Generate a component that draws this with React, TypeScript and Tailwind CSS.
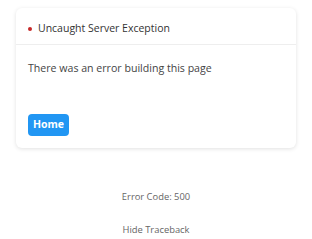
export default function App() {
  return (
    <div
      className="w-full min-h-[239px] bg-white pt-2 px-4"
      style={{ fontFamily: '"Open Sans", "Liberation Sans", sans-serif' }}
    >
      <div className="rounded-md bg-white shadow-[0_1px_4px_rgba(0,0,0,0.12)]">
        <div className="flex items-center gap-[6px] h-[37px] pt-[5px] px-3 border-b border-[#eeeeee]">
          <span className="w-[4px] h-[4px] rounded-full bg-[#c62828]" />
          <span className="text-[10.5px] leading-[15px] text-[#333333]">Uncaught Server Exception</span>
        </div>
        <div className="px-3 pt-[14px] pb-3">
          <p className="text-[10.6px] text-[#444444] leading-[18px]">
            There was an error building this page
          </p>
          <button className="mt-[37px] h-[22px] w-[41px] rounded-[4px] bg-[#2196f3] text-white text-[10.5px] font-bold">
            Home
          </button>
        </div>
      </div>
      <div className="flex flex-col items-center mt-[41px] gap-[18px] text-[9.4px] leading-[15px] text-[#666666]">
        <span>Error Code: 500</span>
        <span>Hide Traceback</span>
      </div>
    </div>
  );
}
